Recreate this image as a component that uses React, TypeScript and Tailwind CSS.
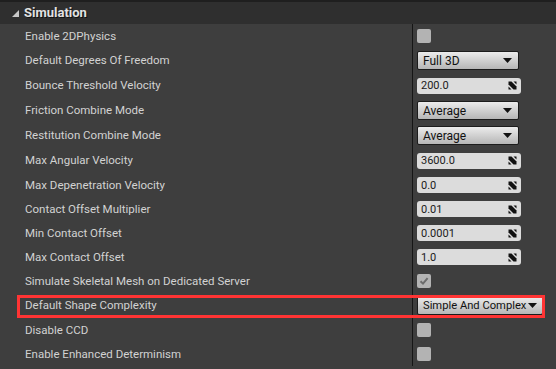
import React from 'react'

type Control =
  | { kind: 'check'; checked?: boolean }
  | { kind: 'combo'; value: string; width: string; text?: string }
  | { kind: 'num'; value: string }

type Row = { label: string; h: string; control: Control; highlight?: boolean }

const rows: Row[] = [
  { label: 'Enable 2DPhysics', h: 'h-[24px]', control: { kind: 'check' } },
  { label: 'Default Degrees Of Freedom', h: 'h-[25px]', control: { kind: 'combo', value: 'Full 3D', width: 'w-[102px]' } },
  { label: 'Bounce Threshold Velocity', h: 'h-[25px]', control: { kind: 'num', value: '200.0' } },
  { label: 'Friction Combine Mode', h: 'h-[25px]', control: { kind: 'combo', value: 'Average', width: 'w-[102px]' } },
  { label: 'Restitution Combine Mode', h: 'h-[25px]', control: { kind: 'combo', value: 'Average', width: 'w-[102px]' } },
  { label: 'Max Angular Velocity', h: 'h-[25px]', control: { kind: 'num', value: '3600.0' } },
  { label: 'Max Depenetration Velocity', h: 'h-[24px]', control: { kind: 'num', value: '0.0' } },
  { label: 'Contact Offset Multiplier', h: 'h-[24px]', control: { kind: 'num', value: '0.01' } },
  { label: 'Min Contact Offset', h: 'h-[24px]', control: { kind: 'num', value: '0.0001' } },
  { label: 'Max Contact Offset', h: 'h-[24px]', control: { kind: 'num', value: '1.0' } },
  { label: 'Simulate Skeletal Mesh on Dedicated Server', h: 'h-[24px]', control: { kind: 'check', checked: true } },
  {
    label: 'Default Shape Complexity',
    h: 'h-[25px]',
    control: { kind: 'combo', value: 'Simple And Complex', width: 'w-[126px]', text: 'text-[11.2px]' },
    highlight: true,
  },
  { label: 'Disable CCD', h: 'h-[24px]', control: { kind: 'check' } },
  { label: 'Enable Enhanced Determinism', h: 'h-[24px]', control: { kind: 'check' } },
]

// little drag/spin handle at the right end of number boxes
function DragIcon() {
  return (
    <svg width="9" height="9" viewBox="0 0 9 9" className="shrink-0">
      <path d="M0.5 0.5 H3.5 L8.5 5.5 V8.5 H5.5 L0.5 3.5 Z" fill="#111" />
      <path d="M5.5 0.5 H8.5 V3.5 Z" fill="#111" />
      <path d="M0.5 5.5 V8.5 H3.5 Z" fill="#111" />
    </svg>
  )
}

function ValueControl({ control }: { control: Control }) {
  if (control.kind === 'check') {
    return (
      <div className="w-[14px] h-[14px] rounded-[2px] bg-[#b3b3b3] flex items-center justify-center">
        {control.checked && (
          <svg width="10" height="10" viewBox="0 0 10 10">
            <path d="M1.5 5.2 L4 7.6 L8.6 2.2" stroke="#6c6c6c" strokeWidth="2" fill="none" />
          </svg>
        )}
      </div>
    )
  }
  if (control.kind === 'combo') {
    return (
      <div
        className={`${control.width} ${control.text ?? 'text-[12px]'} h-[19px] flex items-center justify-between gap-[2px] pl-[5px] pr-[6px] border border-[#1c1c1c] rounded-[2px] bg-gradient-to-b from-[#ececec] to-[#b6b6b6] text-[#111]`}
      >
        <span className="leading-none whitespace-nowrap">{control.value}</span>
        <svg width="9" height="5" viewBox="0 0 9 5" className="shrink-0">
          <path d="M0 0 H9 L4.5 5 Z" fill="#111" />
        </svg>
      </div>
    )
  }
  return (
    <div className="w-[104px] h-[16px] flex items-center justify-between pl-[4px] pr-[4px] rounded-[3px] bg-[#dcdcdc] text-[11px] text-[#1a1a1a]">
      <span className="leading-none">{control.value}</span>
      <DragIcon />
    </div>
  )
}

export default function App() {
  return (
    <div className="w-[556px] h-[369px] overflow-hidden bg-[#3e3e3e] font-['Roboto','Liberation_Sans',sans-serif]">
      {/* Category header */}
      <div className="h-[2px] bg-[#1f1f1f]" />
      <div className="h-[22px] bg-[#2f2f2f] flex items-center pl-[12px] gap-[5px]">
        <svg width="7" height="7" viewBox="0 0 7 7">
          <path d="M7 0 V7 H0 Z" fill="#c8c8c8" />
        </svg>
        <span className="text-[13px] font-bold text-[#e2e2e2] [text-shadow:1px_1px_0_#111]">Simulation</span>
      </div>

      {/* Property rows */}
      <div className="flex flex-col">
        {rows.map((row) => (
          <div key={row.label} className={`relative flex ${row.h}`}>
            <div className="w-[412px] flex items-center pl-[25px] pt-[1px] text-[11.5px] text-[#d2d2d2]">{row.label}</div>
            <div className="w-px bg-[#161616]" />
            <div className="flex-1 flex items-center pl-[4px]">
              <ValueControl control={row.control} />
            </div>
            {row.highlight && (
              <div className="absolute left-[17px] right-[11px] top-[2px] bottom-0 border-[3px] border-[#ff3434] pointer-events-none" />
            )}
          </div>
        ))}
      </div>
    </div>
  )
}
